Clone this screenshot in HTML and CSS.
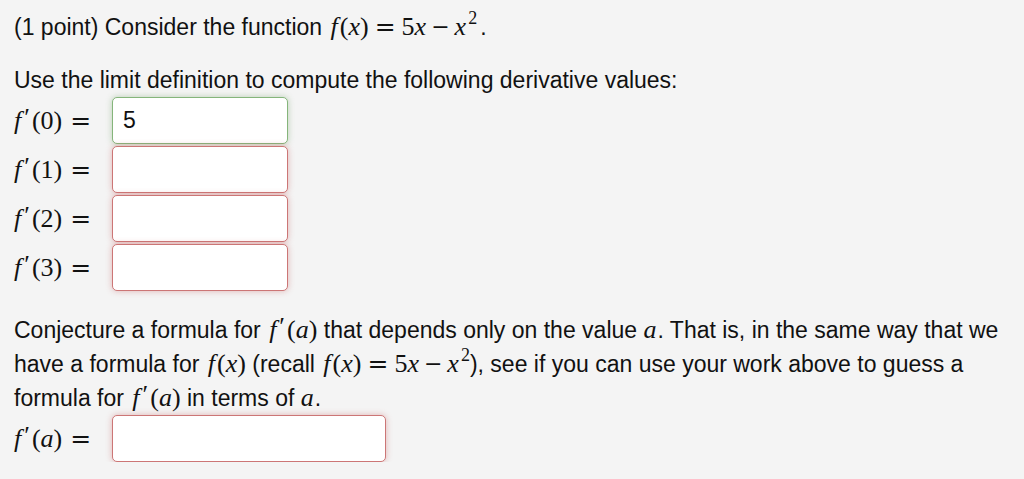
FILE: index.html
```html
<!DOCTYPE html>
<html>
<head>
<meta charset="utf-8">
<link rel="stylesheet" href="styles.css">
</head>
<body>
<div class="problem">
  <p class="line first">(1 point) Consider the function <span class="m"><i class="fn">f</i>(<i>x</i>)<span class="rel">=</span>5<i>x</i><span class="op">−</span><i>x</i><sup>2</sup></span><span class="dot">.</span></p>
  <p class="line intro">Use the limit definition to compute the following derivative values:</p>
  <div class="rows">
    <div class="row"><span class="m label"><i class="fn">f</i><span class="pr">′</span>(0)<span class="rel">=</span></span><div class="box ok">5</div></div>
    <div class="row"><span class="m label"><i class="fn">f</i><span class="pr">′</span>(1)<span class="rel">=</span></span><div class="box bad"></div></div>
    <div class="row"><span class="m label"><i class="fn">f</i><span class="pr">′</span>(2)<span class="rel">=</span></span><div class="box bad"></div></div>
    <div class="row"><span class="m label"><i class="fn">f</i><span class="pr">′</span>(3)<span class="rel">=</span></span><div class="box bad"></div></div>
  </div>
  <p class="line para">Conjecture a formula for <span class="m"><i class="fn">f</i><span class="pr">′</span>(<i>a</i>)</span> that depends only on the value <span class="m var"><i>a</i></span>. That is, in the same way that we have a formula for <span class="m"><i class="fn">f</i>(<i>x</i>)</span> (recall <span class="m"><i class="fn">f</i>(<i>x</i>)<span class="rel">=</span>5<i>x</i><span class="op">−</span><i>x</i><sup>2</sup></span>), see if you can use your work above to guess a formula for <span class="m"><i class="fn">f</i><span class="pr">′</span>(<i>a</i>)</span> in terms of <span class="m var"><i>a</i></span>.</p>
  <div class="row"><span class="m label"><i class="fn">f</i><span class="pr">′</span>(<i>a</i>)<span class="rel">=</span></span><div class="box bad wide"></div></div>
</div>
</body>
</html>
```

FILE: styles.css
```css
html, body {
  margin: 0;
  padding: 0;
  background: #f4f4f4;
}
body {
  font-family: "Liberation Sans", Arial, sans-serif;
  font-size: 23px;
  color: #111;
}
.problem {
  padding: 10px 10px 0 14px;
}
.line {
  margin: 0;
  line-height: 34px;
}
.intro {
  margin-top: 19px;
}
.para {
  margin-top: 22px;
}
.m {
  font-family: "Liberation Serif", "Times New Roman", serif;
  font-size: 26px;
  line-height: 1;
  white-space: nowrap;
  margin-left: 2px;
}
.m.var {
  margin-left: 0;
  margin-right: 1px;
}
.m i {
  font-style: italic;
}
.m .fn {
  margin-right: 2px;
}
.m sup {
  font-size: 18px;
  line-height: 0;
  vertical-align: 11px;
  margin-left: 2px;
}
.dot {
  margin-left: 3px;
}
.rel {
  font-family: "DejaVu Serif", serif;
  font-size: 25px;
  margin: 0 6px;
}
.op {
  font-family: "DejaVu Sans", sans-serif;
  font-size: 22px;
  margin: 0 5px;
  vertical-align: 1px;
}
.pr {
  display: inline-block;
  font-size: 26px;
  line-height: 0;
  vertical-align: 3px;
  margin-left: 1px;
  margin-right: 2px;
}
.rows {
  display: flex;
  flex-direction: column;
  gap: 2px;
}
.row {
  display: flex;
  align-items: center;
  height: 47px;
}
.label {
  width: 98px;
  flex: none;
  margin-left: 0;
}
.label .rel {
  margin-right: 0;
  margin-left: 8px;
}
.box {
  box-sizing: border-box;
  width: 176px;
  height: 47px;
  background: #fff;
  border-radius: 5px;
  font-family: "Liberation Sans", Arial, sans-serif;
  font-size: 23px;
  padding-left: 10px;
  display: flex;
  align-items: center;
}
.ok {
  border: 1px solid #85b57b;
  box-shadow: 0 0 6px rgba(110, 160, 100, 0.45);
}
.bad {
  border: 1px solid #cc7676;
  box-shadow: 0 0 6px rgba(200, 100, 100, 0.45);
}
.wide {
  width: 274px;
}
```
